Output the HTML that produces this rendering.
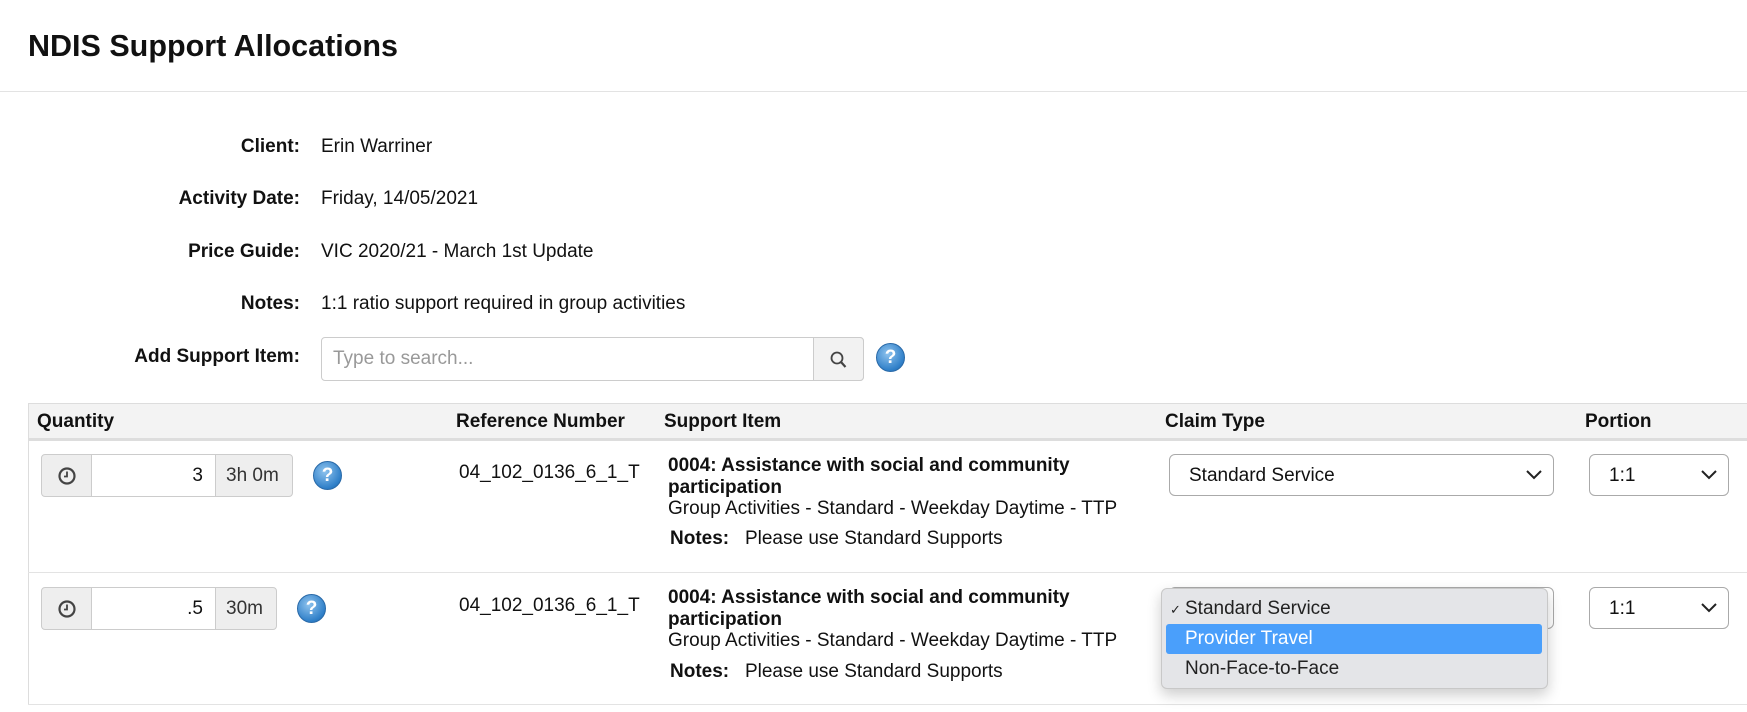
<!DOCTYPE html>
<html><head><style>
*{box-sizing:border-box}
body{margin:0;width:1747px;height:712px;overflow:hidden;background:#fff;font-family:"Liberation Sans",Arial,sans-serif;color:#111;font-size:19px;position:relative}
.a{position:absolute;white-space:nowrap}
.b{font-weight:bold}
.lab{position:absolute;right:1447px;font-weight:bold;white-space:nowrap}
.help{position:absolute;width:29px;height:29px;border-radius:50%;background:radial-gradient(circle at 40% 35%,#8ec3ee,#2f7fc8 70%,#1e5f9e);border:1px solid #2a6aa8;color:#fff;font-weight:bold;font-size:19px;text-align:center;line-height:28px}
.grp{position:absolute;height:43px;border:1px solid #ccc;border-radius:4px;background:#eee;display:flex}
.grp .ic{width:50px;border-right:1px solid #ccc;display:flex;align-items:center;justify-content:center}
.grp .in{background:#fff;width:124px;text-align:right;padding-right:12px;line-height:41px;border-right:1px solid #ccc}
.grp .un{padding-left:10px;line-height:41px;color:#333}
.sel{position:absolute;height:42px;border:1px solid #aaa;border-radius:6px;background:#fff;line-height:41px;padding-left:19px}
.sel svg{position:absolute;right:10px;top:13px}
</style></head><body>
<div class="a b" style="left:28px;top:29px;font-size:30.5px">NDIS Support Allocations</div>
<div class="a" style="left:0;top:91px;width:1747px;border-top:1px solid #e3e3e3"></div>

<div class="lab" style="top:136px">Client:</div><div class="a" style="left:321px;top:136px">Erin Warriner</div>
<div class="lab" style="top:188px">Activity Date:</div><div class="a" style="left:321px;top:188px">Friday, 14/05/2021</div>
<div class="lab" style="top:241px">Price Guide:</div><div class="a" style="left:321px;top:241px">VIC 2020/21 - March 1st Update</div>
<div class="lab" style="top:293px">Notes:</div><div class="a" style="left:321px;top:293px">1:1 ratio support required in group activities</div>
<div class="lab" style="top:346px">Add Support Item:</div>
<div class="a" style="left:321px;top:337px;width:543px;height:44px;border:1px solid #ccc;border-radius:4px;background:#fff"></div>
<div class="a" style="left:333px;top:348px;color:#999">Type to search...</div>
<div class="a" style="left:813px;top:337px;width:51px;height:44px;border:1px solid #ccc;border-radius:0 4px 4px 0;background:#f2f2f2"></div>
<svg class="a" style="left:829px;top:350px" width="20" height="20" viewBox="0 0 20 20"><circle cx="8" cy="8" r="5.5" fill="none" stroke="#444" stroke-width="1.8"/><line x1="12" y1="12" x2="16.5" y2="17" stroke="#444" stroke-width="2.2"/></svg>
<div class="help" style="left:876px;top:343px">?</div>

<div class="a" style="left:28px;top:403px;width:1719px;height:38px;background:#f3f3f3;border-top:1px solid #ddd;border-left:1px solid #ddd;border-bottom:3px solid #ddd"></div>
<div class="a b" style="left:37px;top:411px">Quantity</div>
<div class="a b" style="left:456px;top:411px">Reference Number</div>
<div class="a b" style="left:664px;top:411px">Support Item</div>
<div class="a b" style="left:1165px;top:411px">Claim Type</div>
<div class="a b" style="left:1585px;top:411px">Portion</div>
<div class="a" style="left:28px;top:441px;width:1px;height:264px;background:#ddd"></div>
<div class="a" style="left:28px;top:572px;width:1719px;border-top:1px solid #e3e3e3"></div>
<div class="a" style="left:28px;top:704px;width:1719px;border-top:1px solid #e3e3e3"></div>

<!-- row1 -->
<div class="grp" style="left:41px;top:454px;width:252px"><div class="ic"><svg width="20" height="20" viewBox="0 0 20 20"><circle cx="10" cy="10" r="7.5" fill="none" stroke="#444" stroke-width="2.2"/><path d="M10 5.5V10.5H7" fill="none" stroke="#444" stroke-width="1.8"/></svg></div><div class="in">3</div><div class="un">3h 0m</div></div>
<div class="help" style="left:313px;top:461px">?</div>
<div class="a" style="left:459px;top:462px">04_102_0136_6_1_T</div>
<div class="a b" style="left:668px;top:455px;line-height:22px">0004: Assistance with social and community<br>participation</div>
<div class="a" style="left:668px;top:498px">Group Activities - Standard - Weekday Daytime - TTP</div>
<div class="a" style="left:670px;top:528px"><b>Notes:</b>&nbsp;&nbsp; Please use Standard Supports</div>
<div class="sel" style="left:1169px;top:454px;width:385px">Standard Service<svg width="18" height="14" viewBox="0 0 18 14"><path d="M2 3l7 7 7-7" fill="none" stroke="#222" stroke-width="2"/></svg></div>
<div class="sel" style="left:1589px;top:454px;width:140px">1:1<svg width="18" height="14" viewBox="0 0 18 14"><path d="M2 3l7 7 7-7" fill="none" stroke="#222" stroke-width="2"/></svg></div>

<!-- row2 -->
<div class="grp" style="left:41px;top:587px;width:236px"><div class="ic"><svg width="20" height="20" viewBox="0 0 20 20"><circle cx="10" cy="10" r="7.5" fill="none" stroke="#444" stroke-width="2.2"/><path d="M10 5.5V10.5H7" fill="none" stroke="#444" stroke-width="1.8"/></svg></div><div class="in">.5</div><div class="un">30m</div></div>
<div class="help" style="left:297px;top:594px">?</div>
<div class="a" style="left:459px;top:595px">04_102_0136_6_1_T</div>
<div class="a b" style="left:668px;top:587px;line-height:22px">0004: Assistance with social and community<br>participation</div>
<div class="a" style="left:668px;top:630px">Group Activities - Standard - Weekday Daytime - TTP</div>
<div class="a" style="left:670px;top:661px"><b>Notes:</b>&nbsp;&nbsp; Please use Standard Supports</div>
<div class="sel" style="left:1169px;top:587px;width:385px"></div>
<div class="sel" style="left:1589px;top:587px;width:140px">1:1<svg width="18" height="14" viewBox="0 0 18 14"><path d="M2 3l7 7 7-7" fill="none" stroke="#222" stroke-width="2"/></svg></div>

<div class="a" style="left:1161px;top:588px;width:387px;height:101px;background:#e4e5e8;border:1px solid #c8c8c8;border-radius:6px;box-shadow:0 6px 14px rgba(0,0,0,.2)"></div>
<div class="a" style="left:1166px;top:624px;width:376px;height:30px;background:#4a9ffb;border-radius:3px"></div>
<div class="a" style="left:1170px;top:602px;font-size:13px;color:#222">✓</div>
<div class="a" style="left:1185px;top:598px;color:#222">Standard Service</div>
<div class="a" style="left:1185px;top:628px;color:#fff">Provider Travel</div>
<div class="a" style="left:1185px;top:658px;color:#222">Non-Face-to-Face</div>
</body></html>
